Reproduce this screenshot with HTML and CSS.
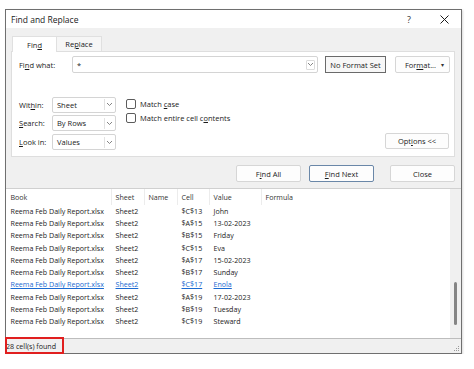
FILE: index.html
```html
<!DOCTYPE html>
<html lang="en">
<head>
<meta charset="utf-8">
<title>Find and Replace</title>
<link rel="stylesheet" href="styles.css">
</head>
<body>
<div class="window">
  <div class="titlebar">
    <span class="title">Find and Replace</span>
    <span class="tb-help">?</span>
    <svg class="tb-close" width="9" height="9" viewBox="0 0 9 9"><path d="M0.5 0.5 L8.5 8.5 M8.5 0.5 L0.5 8.5" stroke="#1a1a1a" stroke-width="1"/></svg>
  </div>
  <div class="client">
    <div class="tabs">
      <div class="tab active"><span>Fin<u>d</u></span></div>
      <div class="tab"><span>Re<u>p</u>lace</span></div>
    </div>
    <div class="panel">
      <div class="find-row">
        <span class="lbl lbl-find">Fi<u>n</u>d what:</span>
        <div class="combo combo-find">
          <span class="combo-text">*</span>
          <span class="chev"><svg width="7" height="5" viewBox="0 0 7 5"><path d="M1 1 L3.5 3.5 L6 1" fill="none" stroke="#777" stroke-width="0.9"/></svg></span>
        </div>
        <div class="nofmt">No Format Set</div>
        <div class="btn btn-fmt"><span>For<u>m</u>at...</span><span class="caret">&#9662;</span></div>
      </div>
      <div class="opt-area">
        <div class="opt-grid">
          <span class="lbl">Wit<u>h</u>in:</span>
          <div class="combo combo-sel"><span class="combo-text">Sheet</span><span class="chev"><svg width="7" height="5" viewBox="0 0 7 5"><path d="M1 1 L3.5 3.5 L6 1" fill="none" stroke="#777" stroke-width="0.9"/></svg></span></div>
          <span class="lbl"><u>S</u>earch:</span>
          <div class="combo combo-sel"><span class="combo-text">By Rows</span><span class="chev"><svg width="7" height="5" viewBox="0 0 7 5"><path d="M1 1 L3.5 3.5 L6 1" fill="none" stroke="#777" stroke-width="0.9"/></svg></span></div>
          <span class="lbl"><u>L</u>ook in:</span>
          <div class="combo combo-sel"><span class="combo-text">Values</span><span class="chev"><svg width="7" height="5" viewBox="0 0 7 5"><path d="M1 1 L3.5 3.5 L6 1" fill="none" stroke="#777" stroke-width="0.9"/></svg></span></div>
        </div>
        <div class="checks">
          <label class="chk"><span class="box"></span><span>Match <u>c</u>ase</span></label>
          <label class="chk"><span class="box"></span><span>Match entire cell c<u>o</u>ntents</span></label>
        </div>
        <div class="btn btn-options"><span>Opt<u>i</u>ons &lt;&lt;</span></div>
      </div>
    </div>
    <div class="actions">
      <div class="btn btn-act"><span>F<u>i</u>nd All</span></div>
      <div class="btn btn-act btn-default"><span><u>F</u>ind Next</span></div>
      <div class="btn btn-act btn-close"><span>Close</span></div>
    </div>
  </div>
  <div class="results">
    <div class="list">
      <div class="row head">
        <span>Book</span><span class="sep">Sheet</span><span class="sep">Name</span><span class="sep">Cell</span><span class="sep">Value</span><span class="sep">Formula</span>
      </div>
      <div class="row"><span>Reema Feb Daily Report.xlsx</span><span>Sheet2</span><span></span><span>$C$13</span><span>John</span><span></span></div>
      <div class="row"><span>Reema Feb Daily Report.xlsx</span><span>Sheet2</span><span></span><span>$A$15</span><span>13-02-2023</span><span></span></div>
      <div class="row"><span>Reema Feb Daily Report.xlsx</span><span>Sheet2</span><span></span><span>$B$15</span><span>Friday</span><span></span></div>
      <div class="row"><span>Reema Feb Daily Report.xlsx</span><span>Sheet2</span><span></span><span>$C$15</span><span>Eva</span><span></span></div>
      <div class="row"><span>Reema Feb Daily Report.xlsx</span><span>Sheet2</span><span></span><span>$A$17</span><span>15-02-2023</span><span></span></div>
      <div class="row"><span>Reema Feb Daily Report.xlsx</span><span>Sheet2</span><span></span><span>$B$17</span><span>Sunday</span><span></span></div>
      <div class="row link"><span>Reema Feb Daily Report.xlsx</span><span>Sheet2</span><span></span><span>$C$17</span><span>Enola</span><span></span></div>
      <div class="row"><span>Reema Feb Daily Report.xlsx</span><span>Sheet2</span><span></span><span>$A$19</span><span>17-02-2023</span><span></span></div>
      <div class="row"><span>Reema Feb Daily Report.xlsx</span><span>Sheet2</span><span></span><span>$B$19</span><span>Tuesday</span><span></span></div>
      <div class="row"><span>Reema Feb Daily Report.xlsx</span><span>Sheet2</span><span></span><span>$C$19</span><span>Steward</span><span></span></div>
    </div>
    <div class="vscroll"><div class="thumb"></div></div>
  </div>
  <div class="status">
    <span class="status-text">28 cell(s) found</span>
    <div class="highlight"></div>
    <svg class="grip" width="7" height="7" viewBox="0 0 7 7"><g fill="#9a9a9a"><rect x="5" y="1" width="1" height="1"/><rect x="3" y="3" width="1" height="1"/><rect x="5" y="3" width="1" height="1"/><rect x="1" y="5" width="1" height="1"/><rect x="3" y="5" width="1" height="1"/><rect x="5" y="5" width="1" height="1"/></g></svg>
  </div>
</div>
</body>
</html>
```

FILE: styles.css
```css
* { box-sizing: border-box; }

html, body {
  margin: 0;
  padding: 0;
  background: #ffffff;
}

body {
  padding: 9px 0 0 5px;
  font-family: "Open Sans", "Noto Sans", "Liberation Sans", sans-serif;
  font-size: 7.5px;
  color: #1b1b1b;
}

u { text-decoration: underline; text-underline-offset: 1px; }

.window {
  width: 457px;
  height: 345px;
  border: 1px solid #6f6f6f;
  background: #f0f0f0;
  display: flex;
  flex-direction: column;
  box-shadow: 1px 1px 2px rgba(0,0,0,0.15);
}

/* title bar */
.titlebar {
  height: 18px;
  background: #ffffff;
  display: flex;
  align-items: center;
  padding-left: 5px;
  flex: none;
}
.title {
  font-size: 8.5px;
  color: #1b1b1b;
  flex: 1;
  padding-top: 1px;
}
.tb-help {
  font-size: 9px;
  margin-right: 29px;
  color: #333;
}
.tb-close {
  margin-right: 12px;
}

/* client area */
.client {
  padding: 8px 6px 0 5px;
  flex: none;
}

.tabs {
  display: flex;
  height: 15px;
  padding-left: 1px;
}
.tab {
  width: 45px;
  height: 15px;
  display: flex;
  align-items: center;
  justify-content: center;
  border: 1px solid #e0e0e0;
  border-bottom: none;
  background: #f6f6f6;
  color: #1b1b1b;
}
.tab.active {
  background: #ffffff;
  height: 16px;
  margin-bottom: -1px;
  position: relative;
  z-index: 1;
}
.tab + .tab { border-left: none; }

.panel {
  background: #ffffff;
  border: 1px solid #dedede;
  height: 106px;
  padding: 4px 3px 6px 7px;
  display: flex;
  flex-direction: column;
}

.find-row {
  display: flex;
  align-items: center;
  height: 18px;
}
.lbl { color: #1b1b1b; }
.lbl-find { width: 53px; flex: none; }

.combo {
  height: 17px;
  background: #fff;
  border: 1px solid #d4d4d4;
  border-radius: 2px;
  display: flex;
  align-items: center;
}
.combo-text {
  flex: 1;
  padding-left: 4px;
}
.chev {
  width: 10px;
  height: 11px;
  border-left: 1px solid #e2e2e2;
  display: flex;
  align-items: center;
  justify-content: center;
  margin-right: 1px;
}
.combo-find { width: 246px; flex: none; }
.combo-find .chev { border: 1px solid #dcdcdc; border-radius: 1px; width: 9px; height: 10px; margin-right: 2px; }

.nofmt {
  width: 61px;
  height: 17px;
  margin-left: 7px;
  border: 1px solid #6a6a6a;
  background: #f7f7f7;
  display: flex;
  align-items: center;
  justify-content: center;
  flex: none;
}

.btn {
  background: #fdfdfd;
  border: 1px solid #d6d6d6;
  border-radius: 2px;
  display: flex;
  align-items: center;
  justify-content: center;
  color: #1b1b1b;
}
.btn-fmt {
  width: 55px;
  height: 17px;
  margin-left: 9px;
  flex: none;
  gap: 5px;
  padding-left: 4px;
}
.caret { font-size: 6px; color: #333; }

.opt-area {
  margin-top: 23px;
  display: flex;
  align-items: flex-start;
  flex: 1;
}
.opt-grid {
  display: grid;
  grid-template-columns: 33px 64px;
  grid-auto-rows: 16px;
  row-gap: 2.6px;
  align-items: center;
  flex: none;
}
.combo-sel { height: 16px; }

.checks {
  margin-left: 10px;
  padding-top: 2px;
  display: flex;
  flex-direction: column;
  gap: 4.5px;
  flex: 1;
}
.chk {
  display: flex;
  align-items: center;
  gap: 4px;
  height: 10px;
}
.box {
  width: 10px;
  height: 10px;
  border: 1px solid #5c5c5c;
  border-radius: 2px;
  background: #fff;
  flex: none;
}

.btn-options {
  align-self: flex-end;
  width: 64px;
  height: 16px;
  margin-bottom: 1px;
  margin-right: 2px;
}

.actions {
  display: flex;
  justify-content: flex-end;
  padding-top: 8px;
  height: 26px;
}
.btn-act {
  width: 65px;
  height: 17px;
}
.btn-act + .btn-act { margin-left: 8px; }
.btn-default { border-color: #6a87a8; }
.btn-act.btn-close { margin-left: 16px; }

/* results */
.results {
  flex: 1;
  display: flex;
  background: #ffffff;
  border-top: 1px solid #d0d0d0;
  margin-top: 5px;
}
.list { flex: 1; font-size: 7.1px; }
.row {
  display: grid;
  grid-template-columns: 105px 33px 33px 32px 52px 1fr;
  height: 12.3px;
  align-items: center;
  white-space: nowrap;
}
.row span { padding-left: 4.5px; overflow: hidden; }
.row.head { height: 15.5px; color: #333; }
.row.head span { height: 15.5px; display: flex; align-items: center; }
.row.head .sep { border-left: 1px solid #ececec; padding-left: 3.5px; }
.row.link span { color: #1a6ad1; text-decoration: underline; text-underline-offset: 1px; }

.vscroll {
  width: 11px;
  background: #f0f0f0;
  position: relative;
  flex: none;
}
.thumb {
  position: absolute;
  left: 4px;
  top: 93px;
  width: 3px;
  height: 43px;
  border-radius: 2px;
  background: #858585;
}

/* status bar */
.status {
  height: 15px;
  flex: none;
  border-top: 1px solid #bdbdbd;
  background: #f0f0f0;
  position: relative;
  display: flex;
  align-items: center;
  padding-left: 0;
  font-size: 7.1px;
}
.status-text { color: #1b1b1b; }
.highlight {
  position: absolute;
  left: -1px;
  top: -2px;
  width: 59px;
  height: 17px;
  border: 2px solid #e01f1f;
}
.grip {
  position: absolute;
  right: 1px;
  bottom: 1px;
}
```
